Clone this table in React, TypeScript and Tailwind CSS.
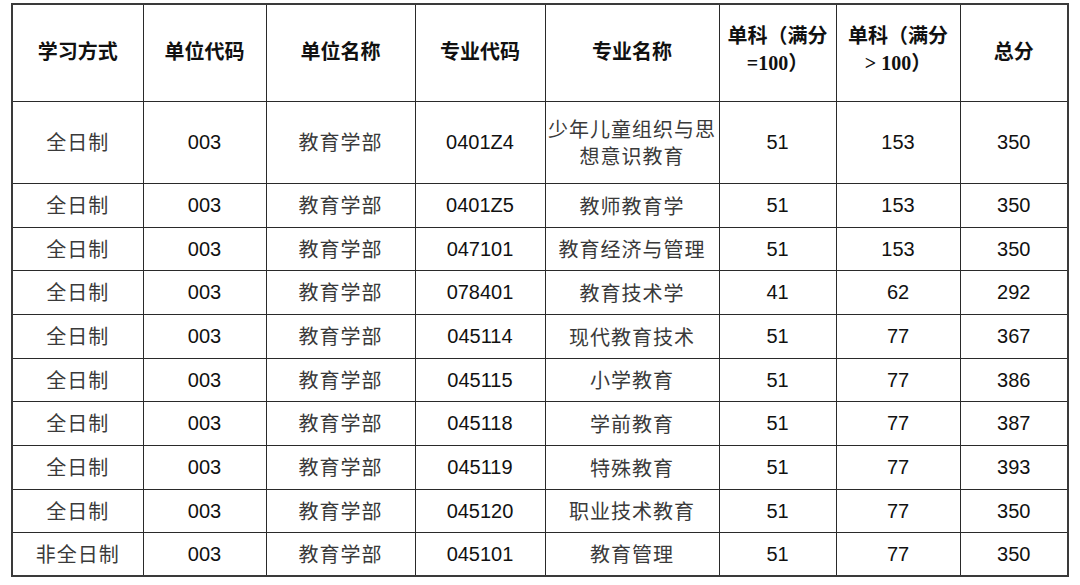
import React from "react";

type Row = {
  mode: string;
  unitCode: string;
  unitName: string;
  majorCode: string;
  majorName: string[];
  single100: string;
  singleOver: string;
  total: string;
  h: string;
};

const rows: Row[] = [
  { mode: "全日制", unitCode: "003", unitName: "教育学部", majorCode: "0401Z4", majorName: ["少年儿童组织与思", "想意识教育"], single100: "51", singleOver: "153", total: "350", h: "h-[82px]" },
  { mode: "全日制", unitCode: "003", unitName: "教育学部", majorCode: "0401Z5", majorName: ["教师教育学"], single100: "51", singleOver: "153", total: "350", h: "h-[44px]" },
  { mode: "全日制", unitCode: "003", unitName: "教育学部", majorCode: "047101", majorName: ["教育经济与管理"], single100: "51", singleOver: "153", total: "350", h: "h-[43px]" },
  { mode: "全日制", unitCode: "003", unitName: "教育学部", majorCode: "078401", majorName: ["教育技术学"], single100: "41", singleOver: "62", total: "292", h: "h-[44px]" },
  { mode: "全日制", unitCode: "003", unitName: "教育学部", majorCode: "045114", majorName: ["现代教育技术"], single100: "51", singleOver: "77", total: "367", h: "h-[44px]" },
  { mode: "全日制", unitCode: "003", unitName: "教育学部", majorCode: "045115", majorName: ["小学教育"], single100: "51", singleOver: "77", total: "386", h: "h-[43px]" },
  { mode: "全日制", unitCode: "003", unitName: "教育学部", majorCode: "045118", majorName: ["学前教育"], single100: "51", singleOver: "77", total: "387", h: "h-[44px]" },
  { mode: "全日制", unitCode: "003", unitName: "教育学部", majorCode: "045119", majorName: ["特殊教育"], single100: "51", singleOver: "77", total: "393", h: "h-[44px]" },
  { mode: "全日制", unitCode: "003", unitName: "教育学部", majorCode: "045120", majorName: ["职业技术教育"], single100: "51", singleOver: "77", total: "350", h: "h-[43px]" },
  { mode: "非全日制", unitCode: "003", unitName: "教育学部", majorCode: "045101", majorName: ["教育管理"], single100: "51", singleOver: "77", total: "350", h: "h-[44px]" },
];

const cjk = "font-['Noto_Sans_CJK_SC',sans-serif] text-[20px] text-[#3a3a3a] tracking-[1px]";
const num = "font-['Liberation_Sans','Noto_Sans_CJK_SC',sans-serif] text-[20px] text-[#111]";
const cell = "border border-[#2a2a2a] text-center align-middle p-0";
const head =
  "border border-[#2a2a2a] text-center align-middle p-0 font-['Liberation_Serif','Noto_Sans_CJK_SC',serif] font-bold text-[20px] text-[#111] leading-[27px]";

export default function App() {
  return (
    <div className="w-[1080px] h-[585px] bg-white pt-[3px] pl-[11px]">
      <table className="table-fixed border-collapse w-[1056px] border-2 border-[#3a3a3a]">
        <colgroup>
          <col className="w-[131px]" />
          <col className="w-[123px]" />
          <col className="w-[149px]" />
          <col className="w-[130px]" />
          <col className="w-[174px]" />
          <col className="w-[117px]" />
          <col className="w-[124px]" />
          <col className="w-[108px]" />
        </colgroup>
        <thead>
          <tr className="h-[97px]">
            <th className={head}>学习方式</th>
            <th className={head}>单位代码</th>
            <th className={head}>单位名称</th>
            <th className={head}>专业代码</th>
            <th className={head}>专业名称</th>
            <th className={head}>
              <div className="-mt-[6px]">单科（满分</div>
              <div>=100）</div>
            </th>
            <th className={head}>
              <div className="-mt-[6px]">单科（满分</div>
              <div>&gt; 100）</div>
            </th>
            <th className={head}>总分</th>
          </tr>
        </thead>
        <tbody>
          {rows.map((r, i) => (
            <tr key={i} className={r.h}>
              <td className={`${cell} ${cjk}`}>{r.mode}</td>
              <td className={`${cell} ${num}`}>{r.unitCode}</td>
              <td className={`${cell} ${cjk}`}>{r.unitName}</td>
              <td className={`${cell} ${num}`}>{r.majorCode}</td>
              <td className={`${cell} ${cjk} leading-[27px]`}>
                {r.majorName.map((line) => (
                  <div key={line}>{line}</div>
                ))}
              </td>
              <td className={`${cell} ${num}`}>{r.single100}</td>
              <td className={`${cell} ${num}`}>{r.singleOver}</td>
              <td className={`${cell} ${num}`}>{r.total}</td>
            </tr>
          ))}
        </tbody>
      </table>
    </div>
  );
}
